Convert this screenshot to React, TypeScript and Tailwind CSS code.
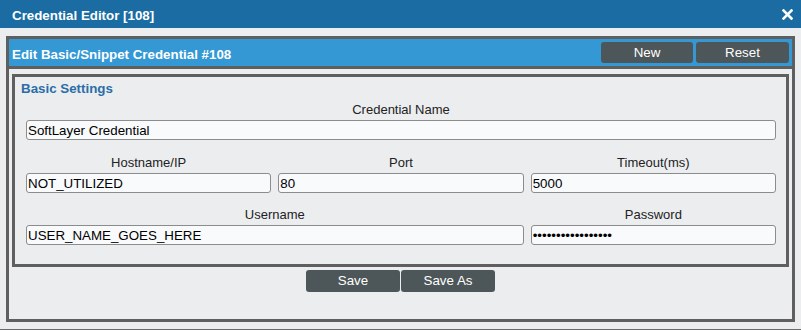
import React from "react";

const font = { fontFamily: '"Liberation Sans", Arial, sans-serif' };

function Field({ label, value, type = "text", className = "" }: { label: string; value: string; type?: string; className?: string }) {
  return (
    <div className={"flex flex-col " + className}>
      <div className="text-center text-[13px] leading-[15px] text-[#222]">{label}</div>
      <input
        type={type}
        readOnly
        defaultValue={value}
        className="mt-[3px] h-[20px] w-full rounded-[3px] border border-[#8c8c8c] bg-[#f8fafc] px-[1px] text-[13.33px] leading-[18px] text-black outline-none"
      />
    </div>
  );
}

function DarkButton({ children, className = "" }: { children: React.ReactNode; className?: string }) {
  return (
    <button className={"flex items-center justify-center rounded-[3px] bg-[#4d5658] text-[13.33px] font-normal text-white " + className}>
      {children}
    </button>
  );
}

export default function App() {
  return (
    <div className="relative h-[330px] w-[801px] overflow-hidden bg-[#ecedef]" style={font}>
      {/* Title bar */}
      <div className="flex h-[28px] items-center justify-between bg-[#1a6ca3] pl-[12px] pr-[8px] pt-[3px]">
        <span className="text-[13.33px] font-bold leading-[15px] text-white">Credential Editor [108]</span>
        <svg width="11" height="11" viewBox="0 0 11 11" className="-mt-[3px]">
          <path d="M1.5 1.5 L9.5 9.5 M9.5 1.5 L1.5 9.5" stroke="white" strokeWidth="2.6" strokeLinecap="square" />
        </svg>
      </div>

      {/* Outer panel */}
      <div className="mx-[6px] mt-[8px] flex h-[286px] flex-col border-[3px] border-[#5f5f5f]">
        <div className="flex h-[30px] items-start justify-between border-b-[3px] border-[#5f5f5f] bg-[#3498d4] pl-[3px] pr-[3px] pt-[3px]">
          <span className="mt-[5px] text-[13.33px] font-bold leading-[15px] text-white">Edit Basic/Snippet Credential #108</span>
          <div className="flex gap-[3px]">
            <DarkButton className="h-[21px] w-[92px]">New</DarkButton>
            <DarkButton className="h-[21px] w-[93px]">Reset</DarkButton>
          </div>
        </div>

        {/* Inner panel */}
        <div className="mx-[3px] mt-[5px] flex h-[193px] flex-col border-[3px] border-[#5f5f5f] pl-[11px] pr-[10px] pt-[4px]">
          <div className="-ml-[5px] text-[13.33px] font-bold leading-[15px] text-[#2b6ea7]">Basic Settings</div>
          <Field label="Credential Name" value="SoftLayer Credential" className="mt-[6px]" />
          <div className="mt-[15px] grid grid-cols-3 gap-x-[7px]">
            <Field label="Hostname/IP" value="NOT_UTILIZED" />
            <Field label="Port" value="80" />
            <Field label="Timeout(ms)" value="5000" />
          </div>
          <div className="mt-[14px] grid grid-cols-3 gap-x-[7px]">
            <Field label="Username" value="USER_NAME_GOES_HERE" className="col-span-2" />
            <Field label="Password" value="passwordpassword1" type="password" />
          </div>
        </div>

        <div className="mt-[3px] flex justify-center gap-[1px]">
          <DarkButton className="h-[22px] w-[94px]">Save</DarkButton>
          <DarkButton className="h-[22px] w-[94px]">Save As</DarkButton>
        </div>
      </div>

      <div className="absolute bottom-0 left-0 h-[1px] w-full bg-[#6a6a6a]" />
    </div>
  );
}
